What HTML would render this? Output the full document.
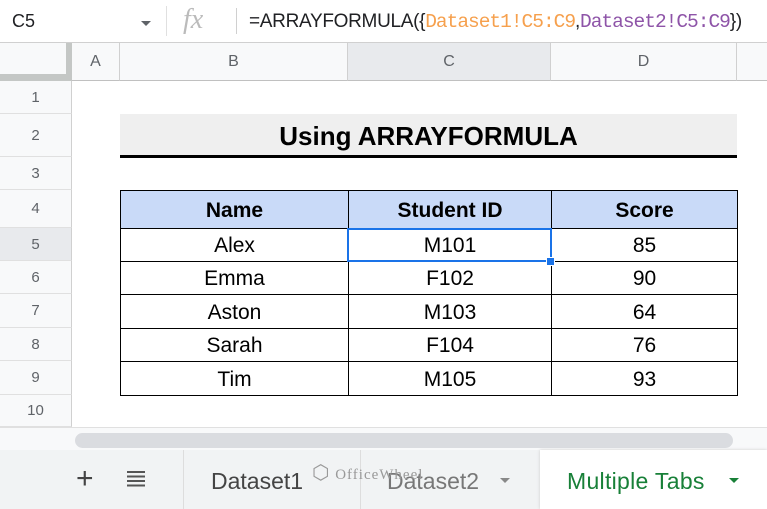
<!DOCTYPE html><html><head><style>
body{margin:0;width:767px;height:509px;overflow:hidden;background:#fff;font-family:"Liberation Sans",sans-serif;position:relative}
.a{position:absolute}
.rh{position:absolute;left:0;width:72px;background:#f8f9fa;border-bottom:1px solid #e0e0e0;border-right:1px solid #d0d0d0;color:#5f6368;font-size:15px;display:flex;align-items:center;justify-content:center;box-sizing:border-box}
.ch{position:absolute;top:43px;height:38px;background:#f8f9fa;border-right:1px solid #d0d0d0;border-bottom:1px solid #c0c0c0;color:#5f6368;font-size:16px;display:flex;align-items:center;justify-content:center;box-sizing:border-box}
table{position:absolute;left:120px;top:190px;border-collapse:collapse;font-size:21px;color:#000}
td{border:1px solid #000;text-align:center;padding:2px 0 0;height:32px;box-sizing:border-box}
th{border:1px solid #000;background:#c9daf8;font-weight:bold;height:38px;box-sizing:border-box;padding-top:4px}
</style></head><body>
<div class="a" style="left:0;top:0;width:767px;height:42px;border-bottom:1px solid #d0d0d0;background:#fff"></div>
<div class="a" style="left:12px;top:11px;font-size:18px;color:#202124">C5</div>
<div class="a" style="left:141px;top:21px;width:0;height:0;border-left:5px solid transparent;border-right:5px solid transparent;border-top:5px solid #5f6368"></div>
<div class="a" style="left:166px;top:6px;width:1px;height:30px;background:#e0e0e0"></div>
<div class="a" style="left:183px;top:4px;font-family:'Liberation Serif',serif;font-style:italic;font-size:28px;color:#bbb">fx</div>
<div class="a" style="left:236px;top:8px;width:1px;height:26px;background:#d0d0d0"></div>
<div class="a" style="left:249px;top:11px;font-size:19px;color:#202124;letter-spacing:-0.3px;white-space:nowrap">=ARRAYFORMULA({<span style="color:#f6a04d;font-family:'Liberation Mono',monospace;font-size:19.5px;letter-spacing:-1px">Dataset1!C5:C9</span>,<span style="color:#8e54a8;font-family:'Liberation Mono',monospace;font-size:19.5px;letter-spacing:-1px">Dataset2!C5:C9</span>})</div>
<div class="a" style="left:0;top:43px;width:72px;height:38px;background:#f8f9fa;box-sizing:border-box;border-right:6px solid #c4c7c5;border-bottom:7px solid #c4c7c5"></div>
<div class="ch" style="left:72px;width:48px">A</div>
<div class="ch" style="left:120px;width:228px">B</div>
<div class="ch" style="left:348px;width:203px;background:#e8eaed">C</div>
<div class="ch" style="left:551px;width:186px">D</div>
<div class="ch" style="left:737px;width:30px;border-right:none"></div>
<div class="rh" style="top:81px;height:33px">1</div>
<div class="rh" style="top:114px;height:43px">2</div>
<div class="rh" style="top:157px;height:33px">3</div>
<div class="rh" style="top:190px;height:38px">4</div>
<div class="rh" style="top:228px;height:33px;background:#e8eaed">5</div>
<div class="rh" style="top:261px;height:33px">6</div>
<div class="rh" style="top:294px;height:34px">7</div>
<div class="rh" style="top:328px;height:33px">8</div>
<div class="rh" style="top:361px;height:34px">9</div>
<div class="rh" style="top:395px;height:32px">10</div>
<div class="a" style="left:120px;top:114px;width:617px;height:41px;background:#efefef;font-weight:bold;font-size:26px;text-align:center;line-height:44px">Using ARRAYFORMULA</div>
<div class="a" style="left:120px;top:155px;width:617px;height:3px;background:#000"></div>
<table>
<tr><th style="width:228px">Name</th><th style="width:203px">Student ID</th><th style="width:186px">Score</th></tr>
<tr><td style="height:33px">Alex</td><td>M101</td><td>85</td></tr>
<tr><td style="height:33px">Emma</td><td>F102</td><td>90</td></tr>
<tr><td style="height:34px">Aston</td><td>M103</td><td>64</td></tr>
<tr><td style="height:33px">Sarah</td><td>F104</td><td>76</td></tr>
<tr><td style="height:34px">Tim</td><td>M105</td><td>93</td></tr>
</table>
<div class="a" style="left:347px;top:228px;width:205px;height:34px;box-sizing:border-box;border:2px solid #1a73e8"></div>
<div class="a" style="left:546px;top:257px;width:7px;height:7px;background:#1a73e8;border:1px solid #fff"></div>
<div class="a" style="left:0;top:427px;width:767px;height:23px;background:#f8f9fa;border-top:1px solid #e0e0e0"></div>
<div class="a" style="left:75px;top:433px;width:658px;height:15px;border-radius:8px;background:#dadce0"></div>
<div class="a" style="left:0;top:450px;width:767px;height:59px;background:#f1f3f4"></div>
<div class="a" style="left:76px;top:462px;font-size:30px;color:#444">+</div>
<div class="a" style="left:127px;top:471px;width:18px;height:16px;background:repeating-linear-gradient(#555 0 2px,transparent 2px 4.5px)"></div>
<div class="a" style="left:183px;top:450px;width:1px;height:59px;background:#ddd"></div>
<div class="a" style="left:360px;top:450px;width:1px;height:59px;background:#ddd"></div>
<div class="a" style="left:211px;top:468px;font-size:23px;color:#444">Dataset1</div>
<div class="a" style="left:387px;top:468px;font-size:23px;color:#777">Dataset2</div>
<div class="a" style="left:500px;top:478px;border-left:5px solid transparent;border-right:5px solid transparent;border-top:5px solid #888"></div>
<div class="a" style="left:312px;top:460px;font-family:'Liberation Serif',serif;font-size:15px;color:#999;letter-spacing:1px"><span style="font-size:20px">⬡</span> OfficeWheel</div>
<div class="a" style="left:540px;top:450px;width:227px;height:59px;background:#fff;box-shadow:0 0 3px #ccc"></div>
<div class="a" style="left:567px;top:468px;font-size:23px;color:#188038;letter-spacing:0.3px">Multiple Tabs</div>
<div class="a" style="left:729px;top:478px;border-left:5px solid transparent;border-right:5px solid transparent;border-top:5px solid #188038"></div>
</body></html>
